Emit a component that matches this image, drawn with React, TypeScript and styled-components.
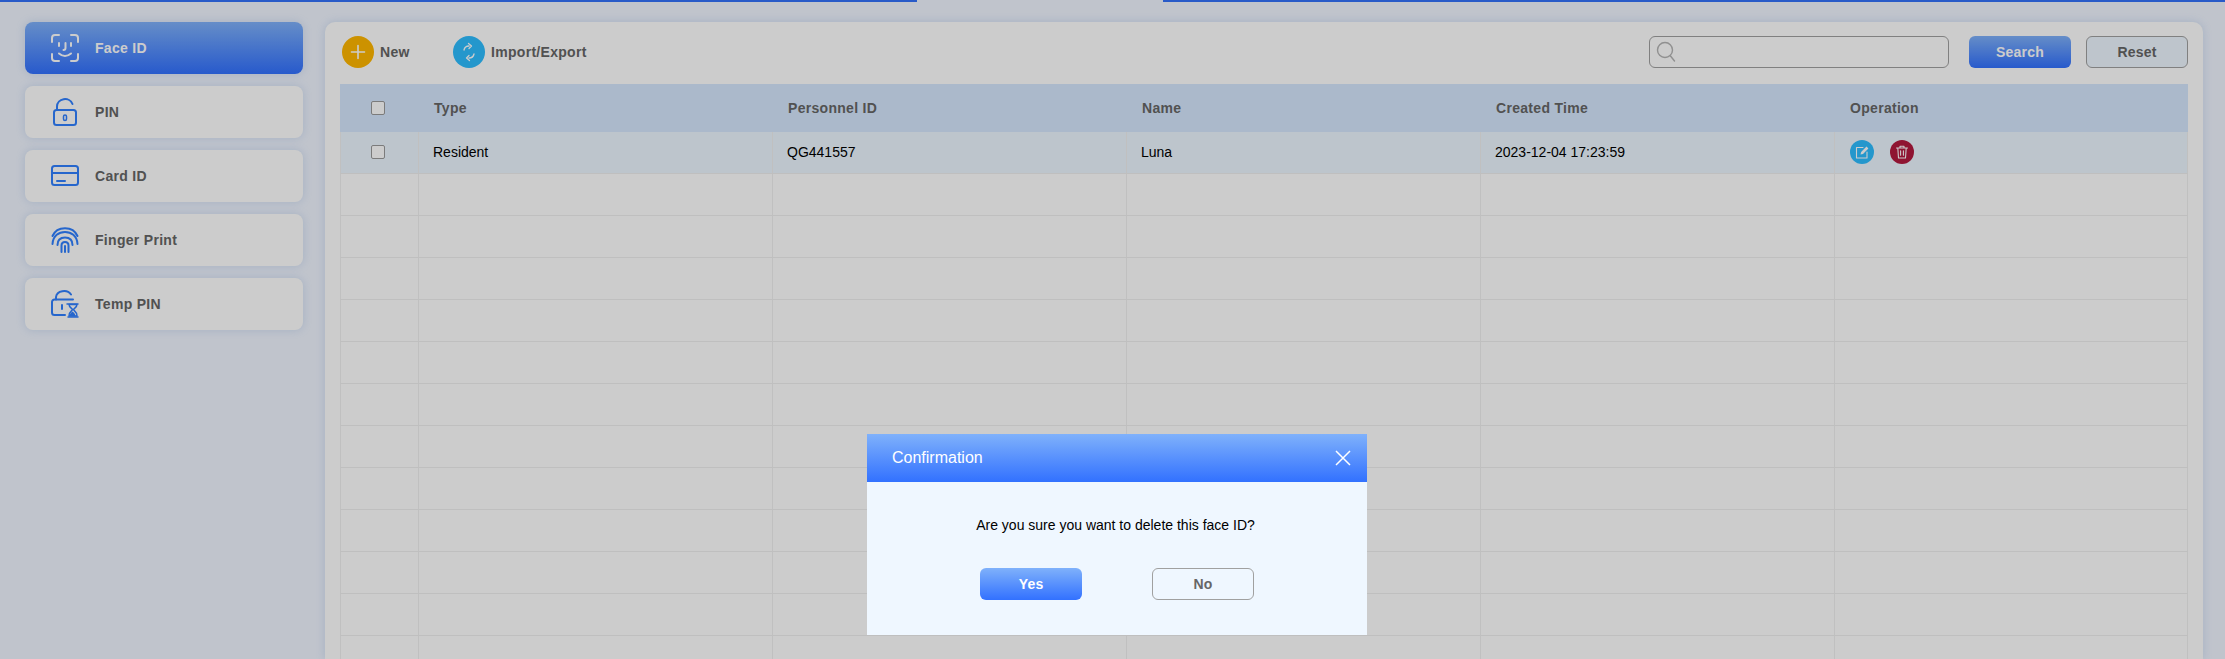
import styled, { createGlobalStyle } from "styled-components";

const GlobalStyle = createGlobalStyle`
  html, body {
    margin: 0;
    padding: 0;
    height: 100%;
    overflow: hidden;
    background: #f0f5ff;
    font-family: "Liberation Sans", Arial, sans-serif;
  }
`;

const TopBar = styled.div`
  display: flex;
  height: 2px;
`;

const TopBarPiece = styled.div<{ $gap?: boolean }>`
  flex: ${(props) => (props.$gap ? "0 0 246px" : "1")};
  background: ${(props) => (props.$gap ? "transparent" : "#3271fb")};
  &:first-child {
    flex: 0 0 917px;
  }
`;

const Page = styled.div`
  display: flex;
  gap: 22px;
  height: 657px;
  padding: 20px 22px 0 25px;
  box-sizing: border-box;
  overflow: hidden;
`;

const Sidebar = styled.nav`
  display: flex;
  flex-direction: column;
  gap: 12px;
  width: 278px;
  flex: none;
`;

const SideItem = styled.div<{ $active?: boolean }>`
  display: flex;
  align-items: center;
  gap: 16px;
  height: 52px;
  padding-left: 26px;
  border-radius: 8px;
  background: ${(props) =>
    props.$active ? "linear-gradient(#7fb1fb, #3271ff)" : "#ffffff"};
  box-shadow: 0 0 8px rgba(120, 160, 220, 0.28);
  color: ${(props) => (props.$active ? "#ffffff" : "#666666")};
  font-size: 14px;
  font-weight: 700;
  letter-spacing: 0.3px;
`;

const SideIcon = styled.svg`
  width: 28px;
  height: 28px;
  flex: none;
  fill: none;
  stroke: currentColor;
  stroke-width: 2;
  stroke-linecap: round;
  stroke-linejoin: round;
`;

const BlueIcon = styled(SideIcon)`
  color: #3080ff;
`;

const Panel = styled.main`
  flex: 1;
  padding: 14px 15px 0;
  background: #ffffff;
  border-radius: 10px 10px 0 0;
  box-shadow: 0 0 8px rgba(120, 160, 220, 0.28);
`;

const Toolbar = styled.div`
  display: flex;
  align-items: center;
  height: 32px;
  margin-bottom: 16px;
`;

const ToolAction = styled.div<{ $wide?: boolean }>`
  display: flex;
  align-items: center;
  gap: 6px;
  width: ${(props) => (props.$wide ? "auto" : "111px")};
  padding-left: ${(props) => (props.$wide ? "0" : "2px")};
  color: #666666;
  font-size: 14px;
  font-weight: 700;
  letter-spacing: 0.3px;
`;

const RoundIcon = styled.svg<{ $size: number }>`
  width: ${(props) => props.$size}px;
  height: ${(props) => props.$size}px;
  flex: none;
  fill: none;
  stroke: #ffffff;
  stroke-linecap: round;
  stroke-linejoin: round;
`;

const SearchField = styled.div`
  display: flex;
  align-items: center;
  width: 300px;
  height: 32px;
  margin-left: auto;
  padding-left: 6px;
  box-sizing: border-box;
  border: 1px solid #a0a0a0;
  border-radius: 6px;
`;

const SearchGlass = styled.svg`
  width: 22px;
  height: 24px;
  fill: none;
  stroke: #b4b4b4;
  stroke-width: 1.4;
  stroke-linecap: round;
`;

const Button = styled.div<{ $primary?: boolean; $flat?: boolean }>`
  display: flex;
  align-items: center;
  justify-content: center;
  width: 102px;
  height: 32px;
  box-sizing: border-box;
  border-radius: 6px;
  border: ${(props) => (props.$primary ? "none" : "1px solid #a0a0a0")};
  background: ${(props) =>
    props.$primary
      ? "linear-gradient(#7fb1fb, #3271ff)"
      : props.$flat
        ? "transparent"
        : "#eef7ff"};
  color: ${(props) => (props.$primary ? "#ffffff" : "#666666")};
  font-size: 14px;
  font-weight: 700;
  letter-spacing: 0.2px;
`;

const SearchButton = styled(Button)`
  margin-left: 20px;
`;

const ResetButton = styled(Button)`
  margin-left: 15px;
`;

const HeadRow = styled.div`
  display: grid;
  grid-template-columns: 78px repeat(4, 354px) 1fr;
  height: 48px;
  background: #d6e8fe;
  color: #666666;
  font-size: 14px;
  font-weight: 700;
  letter-spacing: 0.3px;
`;

const HeadCell = styled.div`
  display: flex;
  align-items: center;
  padding-left: 16px;
`;

const CheckCell = styled.div`
  display: flex;
  align-items: center;
  padding-left: 31px;
`;

const Check = styled.div`
  width: 14px;
  height: 14px;
  box-sizing: border-box;
  background: #ffffff;
  border: 1px solid #9a9a9a;
  border-radius: 2px;
`;

const Row = styled.div<{ $filled?: boolean }>`
  display: grid;
  grid-template-columns: 78px repeat(4, 354px) 1fr;
  height: 42px;
  box-sizing: border-box;
  border-bottom: 1px solid #efefef;
  background: ${(props) => (props.$filled ? "#edf7ff" : "#ffffff")};
  color: #000000;
  font-size: 14px;
`;

const Cell = styled.div`
  display: flex;
  align-items: center;
  gap: 16px;
  padding: 0 0 1px 14px;
  border-left: 1px solid #f0f0f0;
  &:last-child {
    padding-left: 15px;
    border-right: 1px solid #f0f0f0;
  }
`;

const RowCheckCell = styled(CheckCell)`
  border-left: 1px solid #f0f0f0;
  padding: 0 0 1px 30px;
`;

const Overlay = styled.div`
  position: fixed;
  inset: 0;
  background: rgba(0, 0, 0, 0.2);
`;

const Dialog = styled.div`
  position: absolute;
  left: 867px;
  top: 434px;
  width: 500px;
  height: 201px;
  background: #eff7ff;
`;

const DialogHead = styled.div`
  display: flex;
  align-items: center;
  justify-content: space-between;
  height: 48px;
  padding: 0 16px 0 25px;
  background: linear-gradient(#7fb1fb, #3271ff);
  color: #ffffff;
  font-size: 16px;
`;

const CloseIcon = styled.svg`
  width: 16px;
  height: 16px;
  stroke: #ffffff;
  stroke-width: 1.5;
`;

const DialogText = styled.div`
  margin-top: 34px;
  padding-right: 3px;
  line-height: 18px;
  text-align: center;
  color: #000000;
  font-size: 14px;
`;

const DialogActions = styled.div`
  display: flex;
  justify-content: center;
  gap: 70px;
  margin-top: 34px;
`;

const columns = ["Type", "Personnel ID", "Name", "Created Time", "Operation"];

function FaceIcon() {
  return (
    <SideIcon viewBox="0 0 28 28">
      <path d="M1 8V4a3 3 0 0 1 3-3h4M20 1h4a3 3 0 0 1 3 3v4M27 20v4a3 3 0 0 1-3 3h-4M8 27H4a3 3 0 0 1-3-3v-4" />
      <path d="M8 9v3M20 9v3M14.5 9v5q0 2-2 2M8 19.5q6 5 12 0" />
    </SideIcon>
  );
}

function PinIcon() {
  return (
    <BlueIcon viewBox="0 0 28 28">
      <rect x="3" y="12" width="22" height="15" rx="2.5" />
      <path d="M6 12V8.5a8 7.5 0 0 1 15.5-2.5" />
      <rect x="12.5" y="17" width="3" height="5.5" rx="1.5" strokeWidth="1.5" />
    </BlueIcon>
  );
}

function CardIcon() {
  return (
    <BlueIcon viewBox="0 0 28 28">
      <rect x="1" y="4" width="26" height="19" rx="2.5" />
      <path d="M1 11h26M6 19h8" />
    </BlueIcon>
  );
}

function FingerIcon() {
  return (
    <BlueIcon viewBox="0 0 28 28">
      <path d="M1.5 10C6 -0.5 22 -0.5 26.5 10" />
      <path d="M1.5 18C2 9.500 8 6 14 6S26 9.500 26.500 18" />
      <path d="M6.500 19C6.500 13.500 9.500 11.500 14 11.500S21.500 13.500 21.500 19" />
      <path d="M10.500 26V19.500c0-2.500 1.500-3.500 3.500-3.500s3.500 1 3.500 3.500V26M14 20v6" />
    </BlueIcon>
  );
}

function TempPinIcon() {
  return (
    <BlueIcon viewBox="0 0 28 28">
      <path d="M14 25H3.500A2.500 2.500 0 0 1 1 22.500V12a2.500 2.500 0 0 1 2.500-2.500H22" />
      <path d="M5 9.500V7a8 6.500 0 0 1 15-2.500M11 15v4" />
      <path d="M16 14h11M17 27h10" strokeWidth="1.500" />
      <path d="M18 14.500c0 3 3.500 4 3.500 5s-3.500 2-3.500 6.500h8c0-4.500-3.500-5.500-3.500-6.500s3.500-2 3.500-5z" strokeWidth="1.500" />
      <path d="M18.500 26c0-2.500 2-3.500 3-4.500 1 1 3 2 3 4.500z" fill="currentColor" stroke="none" />
    </BlueIcon>
  );
}

function PlusIcon() {
  return (
    <RoundIcon $size={32} viewBox="0 0 32 32">
      <circle cx="16" cy="16" r="16" fill="#ffb700" stroke="none" />
      <path d="M16 9.500v13M9.500 16h13" strokeWidth="1.600" />
    </RoundIcon>
  );
}

function SyncIcon() {
  return (
    <RoundIcon $size={32} viewBox="0 0 32 32">
      <circle cx="16" cy="16" r="16" fill="#2ebdff" stroke="none" />
      <path d="M11 14c.500-2.500 2.500-4 5-4M15.500 7.500l3 2.500-2.500 2.500" strokeWidth="1.300" />
      <path d="M21 18c-.500 2.500-2.500 4-5 4M16.500 24.500l-3-2.500 2.500-2.500" strokeWidth="1.300" />
    </RoundIcon>
  );
}

function EditIcon() {
  return (
    <RoundIcon $size={24} viewBox="0 0 24 24">
      <circle cx="12" cy="12" r="12" fill="#2ebdff" stroke="none" />
      <path d="M13 7.500H6.500v10.500h10.500v-6" strokeWidth="1.100" />
      <path d="M10.500 14.500l.6-2.500 5.400-5.400 1.900 1.900-5.400 5.400z" fill="#ffffff" stroke="none" />
    </RoundIcon>
  );
}

function TrashIcon() {
  return (
    <RoundIcon $size={24} viewBox="0 0 24 24">
      <circle cx="12" cy="12" r="12" fill="#b3193e" stroke="none" />
      <path d="M6.500 8h11M10 8V6.200h4V8M7.800 8l.7 10h7l.7-10M10.600 10.800v4.500M13.400 10.800v4.500" strokeWidth="1.100" />
    </RoundIcon>
  );
}

export default function App() {
  return (
    <>
      <GlobalStyle />
      <TopBar>
        <TopBarPiece />
        <TopBarPiece $gap />
        <TopBarPiece />
      </TopBar>
      <Page>
        <Sidebar>
          <SideItem $active>
            <FaceIcon />
            Face ID
          </SideItem>
          <SideItem>
            <PinIcon />
            PIN
          </SideItem>
          <SideItem>
            <CardIcon />
            Card ID
          </SideItem>
          <SideItem>
            <FingerIcon />
            Finger Print
          </SideItem>
          <SideItem>
            <TempPinIcon />
            Temp PIN
          </SideItem>
        </Sidebar>
        <Panel>
          <Toolbar>
            <ToolAction>
              <PlusIcon />
              New
            </ToolAction>
            <ToolAction $wide>
              <SyncIcon />
              Import/Export
            </ToolAction>
            <SearchField>
              <SearchGlass viewBox="0 0 22 24">
                <circle cx="9" cy="10" r="7.500" />
                <path d="M14.500 16l4 5" />
              </SearchGlass>
            </SearchField>
            <SearchButton $primary>Search</SearchButton>
            <ResetButton>Reset</ResetButton>
          </Toolbar>
          <HeadRow>
            <CheckCell>
              <Check />
            </CheckCell>
            {columns.map((name) => (
              <HeadCell key={name}>{name}</HeadCell>
            ))}
          </HeadRow>
          <Row $filled>
            <RowCheckCell>
              <Check />
            </RowCheckCell>
            <Cell>Resident</Cell>
            <Cell>QG441557</Cell>
            <Cell>Luna</Cell>
            <Cell>2023-12-04 17:23:59</Cell>
            <Cell>
              <EditIcon />
              <TrashIcon />
            </Cell>
          </Row>
          {Array.from({ length: 12 }, (_, i) => (
            <Row key={i}>
              <RowCheckCell />
              <Cell />
              <Cell />
              <Cell />
              <Cell />
              <Cell />
            </Row>
          ))}
        </Panel>
      </Page>
      <Overlay>
        <Dialog>
          <DialogHead>
            Confirmation
            <CloseIcon viewBox="0 0 16 16">
              <path d="M1 1l14 14M15 1L1 15" />
            </CloseIcon>
          </DialogHead>
          <DialogText>Are you sure you want to delete this face ID?</DialogText>
          <DialogActions>
            <Button $primary>Yes</Button>
            <Button $flat>No</Button>
          </DialogActions>
        </Dialog>
      </Overlay>
    </>
  );
}
